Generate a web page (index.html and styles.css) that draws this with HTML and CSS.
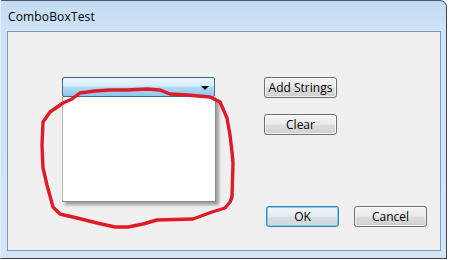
FILE: index.html
```html
<!DOCTYPE html>
<html>
<head>
<meta charset="utf-8">
<link rel="stylesheet" href="styles.css">
</head>
<body>
<div class="window">
  <div class="titlebar">ComboBoxTest</div>
  <div class="client">
    <div class="top-row">
      <div class="combo-col">
        <div class="combo"><span class="arrow"></span></div>
        <div class="droplist"></div>
      </div>
      <div class="btn-col">
        <div class="btn">Add Strings</div>
        <div class="btn">Clear</div>
      </div>
    </div>
    <div class="bottom-row">
      <div class="btn default">OK</div>
      <div class="btn">Cancel</div>
    </div>
  </div>
</div>
<svg class="annotation" width="449" height="260" viewBox="0 0 449 260">
  <path d="M80,93 L95,91 L110,90 L127,90 L147,89 L160,90 L170,94 L187,95 L210,97 L220,102 L227,118 L230,135 L232,152 L233,163 L232,197 L230,202 L225,208 L212,212 L193,219 L157,220 L143,224 L128,227 L115,227 L97,223 L77,218 L60,214 L53,207 L47,185 L43,168 L42,145 L43,122 L50,112 L63,103 L72,99 Z" fill="none" stroke="#de1b27" stroke-width="3.4" stroke-linejoin="round" stroke-linecap="round"/>
</svg>
</body>
</html>
```

FILE: styles.css
```css
html, body {
  margin: 0;
  padding: 0;
  background: #ffffff;
}
body {
  width: 449px;
  height: 260px;
  position: relative;
  overflow: hidden;
  font-family: "Open Sans", "Noto Sans", "DejaVu Sans", sans-serif;
}
.window {
  width: 447px;
  height: 259px;
  box-sizing: border-box;
  border: 1px solid #3a4654;
  border-left-color: #e4eef8;
  border-top-color: #4a5868;
  border-radius: 2px 7px 0 0;
  background: linear-gradient(180deg, #c3dbf2 0px, #cfe3f7 30px, #d3e5f7 100%);
  padding: 0 5px 7px 6px;
  display: flex;
  flex-direction: column;
}
.titlebar {
  height: 30px;
  box-sizing: border-box;
  padding: 8px 0 0 1px;
  font-size: 12px;
  line-height: 15px;
  color: #000;
  letter-spacing: 0.15px;
}
.client {
  flex: 1;
  border: 1px solid #8499b0;
  background: #f0f0f0;
  display: flex;
  flex-direction: column;
  padding: 45px 13px 23px 54px;
}
.top-row {
  display: flex;
  align-items: flex-start;
}
.combo-col {
  width: 154px;
  display: flex;
  flex-direction: column;
}
.combo {
  width: 153px;
  height: 20px;
  box-sizing: border-box;
  border: 1px solid #3c6c98;
  border-radius: 2px;
  background: linear-gradient(180deg, #eaf5fd 0%, #d7ecfb 45%, #b2dbf5 50%, #8ec8ed 100%);
  display: flex;
  justify-content: flex-end;
  align-items: center;
  padding-right: 5px;
}
.arrow {
  width: 0;
  height: 0;
  border-left: 4px solid transparent;
  border-right: 4px solid transparent;
  border-top: 4px solid #000;
  margin-top: 1px;
}
.droplist {
  width: 154px;
  height: 105px;
  box-sizing: border-box;
  background: #ffffff;
  border: 1px solid #b4b4b4;
  border-top: none;
  border-right-color: #8a8a8a;
  border-bottom-color: #8a8a8a;
  box-shadow: 3px 3px 3px rgba(0, 0, 0, 0.35);
}
.btn-col {
  margin-left: 48px;
  display: flex;
  flex-direction: column;
  gap: 16px;
}
.btn {
  width: 73px;
  height: 21px;
  box-sizing: border-box;
  border: 1px solid #707070;
  border-radius: 3px;
  background: linear-gradient(180deg, #f4f4f4 0%, #ebebeb 48%, #dddddd 52%, #cfcfcf 100%);
  box-shadow: inset 0 0 0 1px rgba(255, 255, 255, 0.7);
  font-size: 12px;
  line-height: 19px;
  text-align: center;
  color: #000;
}
.btn.default {
  border-color: #3c7fb1;
  box-shadow: inset 0 0 0 1px #7fd0f2;
  background: linear-gradient(180deg, #eef4f8 0%, #e6edf1 48%, #d8e0e5 52%, #ccd5da 100%);
}
.bottom-row {
  margin-top: auto;
  display: flex;
  justify-content: flex-end;
  gap: 15px;
}
.annotation {
  position: absolute;
  left: 0;
  top: 0;
  pointer-events: none;
}
```
